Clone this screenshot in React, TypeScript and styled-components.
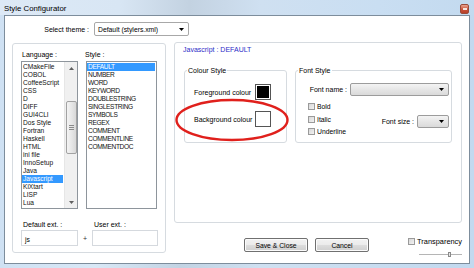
import React from "react";
import styled, { createGlobalStyle } from "styled-components";

const GlobalStyle = createGlobalStyle`
  html, body { margin: 0; padding: 0; }
  body {
    width: 474px; height: 268px; overflow: hidden;
    font-family: "Liberation Sans", Arial, sans-serif;
    color: #000;
  }
  * { box-sizing: border-box; }
`;

const Frame = styled.div`
  width: 474px;
  height: 268px;
  display: flex;
  flex-direction: column;
  background: linear-gradient(90deg, #cfe1f3 0%, #d9e8f6 20%, #c2d3e3 38%, #cfe0f1 55%, #c2d9ef 100%);
`;

const TitleBar = styled.div`
  height: 15px;
  display: flex;
  align-items: center;
  padding: 0 5px 0 4px;
  font-size: 7.8px;
  background: linear-gradient(90deg, #dde9f6 0%, #d8e6f4 25%, #c3d2e1 40%, #cfe0f1 55%, #c9def2 80%, #c3daef 100%);
`;

const TitleText = styled.span`
  flex: 1;
  padding-top: 1px;
`;

const CloseButton = styled.div`
  width: 9px;
  height: 10px;
  margin-top: 2px;
  border: 1px solid #9a4b3a;
  border-radius: 2px;
  background: linear-gradient(#eaa592, #c9523a 55%, #b8402a);
  display: flex;
  align-items: center;
  justify-content: center;
  &::after {
    content: "";
    width: 4px;
    height: 2px;
    background: #f6e6e0;
  }
`;

const Client = styled.div`
  flex: 1;
  margin: 0 4px 4px 4px;
  border: 1px solid #7d8d9c;
  background: #fff;
  display: flex;
  flex-direction: column;
`;

const ThemeRow = styled.div`
  margin-top: 6px;
  height: 14px;
  padding-left: 38px;
  display: flex;
  align-items: center;
  gap: 5px;
  font-size: 7px;
`;

const ThemeLabel = styled.span`
  width: 46px;
  text-align: right;
`;

const Combo = styled.div<{ $w: number; $h: number; $flat?: boolean }>`
  width: ${(p) => p.$w}px;
  height: ${(p) => p.$h}px;
  border: 1px solid ${(p) => (p.$flat ? "#a8a8a8" : "#9c9c9c")};
  border-radius: 2px;
  background: ${(p) =>
    p.$flat ? "#fff" : "linear-gradient(#f4f4f4, #e6e6e6 50%, #dadada)"};
  display: flex;
  align-items: center;
  padding: 0 4px 0 3px;
  font-size: 6.8px;
  svg { margin-left: auto; }
`;

const DownArrow = () => (
  <svg width="5" height="3" viewBox="0 0 5 3">
    <path d="M0 0 H5 L2.5 3 Z" fill="#000" />
  </svg>
);

const Main = styled.div`
  margin-top: 6px;
  padding-left: 7px;
  display: flex;
  gap: 8px;
`;

const GroupBox = styled.div`
  border: 1px solid #d6dbe0;
  border-radius: 3px;
  background: #fff;
`;

const LeftGroup = styled(GroupBox)`
  width: 154px;
  height: 210px;
  margin-top: 1px;
  padding: 7px 0 0 8px;
  font-size: 7px;
`;

const ListGrid = styled.div`
  display: grid;
  grid-template-columns: 57px 71px;
  column-gap: 8px;
`;

const ColLabel = styled.div<{ $shift?: number }>`
  height: 10px;
  padding-left: 1px;
  margin-left: ${(p) => p.$shift ?? 0}px;
`;

const ListBox = styled.div`
  height: 148px;
  border: 1px solid #8e959c;
  background: #fff;
  display: flex;
`;

const Items = styled.div`
  flex: 1;
  padding: 1px 0 0 0;
  overflow: hidden;
`;

const Item = styled.div<{ $sel?: boolean; $caps?: boolean }>`
  height: 8px;
  line-height: 8px;
  font-size: 6.6px;
  padding-left: 1px;
  margin-right: 1px;
  white-space: nowrap;
  letter-spacing: ${(p) => (p.$caps ? "-0.35px" : "0")};
  background: ${(p) => (p.$sel ? "#3399ff" : "transparent")};
  color: ${(p) => (p.$sel ? "#fff" : "#111")};
`;

const ScrollBar = styled.div`
  width: 13px;
  background: #f0f0f0;
  border-left: 1px solid #e6e6e6;
  display: flex;
  flex-direction: column;
  align-items: center;
`;

const ScrollArrow = styled.div`
  height: 12px;
  display: flex;
  align-items: center;
  justify-content: center;
`;

const Thumb = styled.div`
  width: 11px;
  height: 53px;
  margin-top: 27px;
  border: 1px solid #a2a2a2;
  border-radius: 2px;
  background: linear-gradient(90deg, #f4f4f4, #e4e4e4 60%, #d8d8d8);
  display: flex;
  align-items: center;
  justify-content: center;
`;

const Grip = styled.div`
  width: 5px;
  height: 5px;
  background: repeating-linear-gradient(#8a8a8a 0 1px, transparent 1px 2px);
`;

const Spacer = styled.div`
  flex: 1;
`;

const ExtLabels = styled.div`
  margin-top: 9px;
  height: 10px;
  display: grid;
  grid-template-columns: 57px 14px 66px;
  align-items: end;
`;

const ExtLabel = styled.div<{ $drop?: number }>`
  padding-left: 2px;
  padding-top: ${(p) => p.$drop ?? 0}px;
`;

const ExtInputs = styled.div`
  margin-top: 2px;
  display: grid;
  grid-template-columns: 57px 14px 66px;
  align-items: center;
`;

const TextInput = styled.div`
  height: 16px;
  border: 1px solid #d5d9de;
  background: #fff;
  font-size: 6.8px;
  padding: 5px 0 0 3px;
`;

const Plus = styled.div`
  text-align: center;
  font-size: 7px;
  color: #333;
`;

const RightCol = styled.div`
  width: 288px;
  display: flex;
  flex-direction: column;
`;

const RightGroup = styled(GroupBox)`
  position: relative;
  height: 181px;
  padding: 3px 0 0 9px;
  font-size: 7px;
`;

const StyleTitle = styled.div`
  height: 9px;
  margin-left: -1px;
  color: #2d2dc8;
  font-size: 7px;
`;

const SubRow = styled.div`
  margin-top: 11px;
  display: flex;
  gap: 8px;
`;

const SubGroup = styled.fieldset<{ $w: number }>`
  width: ${(p) => p.$w}px;
  height: 77px;
  margin: 0;
  border: 1px solid #d6dbe0;
  border-radius: 3px;
  padding: 0;
  min-width: 0;
`;

const Legend = styled.legend`
  font-size: 7px;
  line-height: 9px;
  padding: 0 1px;
  margin-left: 2px;
`;

const ColourBody = styled.div`
  padding: 9px 0 0 9px;
  display: flex;
  flex-direction: column;
  gap: 11px;
`;

const ColourRow = styled.div`
  width: 77px;
  height: 16px;
  display: flex;
  align-items: center;
  justify-content: space-between;
`;

const Swatch = styled.div<{ $c: string }>`
  width: 16px;
  height: 16px;
  border: 1px solid #555;
  background: ${(p) => p.$c};
  box-shadow: inset 0 0 0 1px #fff;
`;

const FontBody = styled.div`
  padding: 8px 2px 0 12px;
  display: flex;
  flex-direction: column;
`;

const FontNameRow = styled.div`
  display: flex;
  justify-content: flex-end;
  align-items: center;
  gap: 3px;
`;

const FontLower = styled.div`
  margin-top: 7px;
  display: flex;
  align-items: center;
`;

const CheckCol = styled.div`
  display: flex;
  flex-direction: column;
`;

const CheckRow = styled.div`
  height: 12.5px;
  display: flex;
  align-items: flex-start;
  gap: 2px;
  font-size: 6.8px;
  line-height: 7px;
`;

const Box = styled.div`
  width: 7px;
  height: 7px;
  border: 1px solid #9a9a9a;
  background: linear-gradient(135deg, #d8d8d8, #f2f2f2);
`;

const FontSizeRow = styled.div`
  margin-left: auto;
  display: flex;
  align-items: center;
  gap: 3px;
`;

const Ellipse = styled.svg`
  position: absolute;
  left: -1px;
  top: 55px;
  pointer-events: none;
`;

const BottomRow = styled.div`
  margin-top: 15px;
  padding-left: 70px;
  display: flex;
  align-items: flex-start;
  gap: 7px;
`;

const Button = styled.div<{ $w: number }>`
  width: ${(p) => p.$w}px;
  height: 14px;
  border: 1px solid #707070;
  border-radius: 2px;
  background: linear-gradient(#f2f2f2, #ebebeb 50%, #dddddd 51%, #cfcfcf);
  box-shadow: inset 0 0 0 1px #fbfbfb;
  font-size: 6.8px;
  display: flex;
  align-items: center;
  justify-content: center;
`;

const TransBlock = styled.div`
  margin-left: auto;
  display: flex;
  flex-direction: column;
  align-items: flex-end;
`;

const TransRow = styled.div`
  display: flex;
  align-items: center;
  gap: 2px;
  font-size: 7.4px;
  line-height: 7px;
`;

const Slider = styled.div`
  margin-top: 7px;
  width: 43px;
  height: 5px;
  position: relative;
  &::before {
    content: "";
    position: absolute;
    left: 0;
    right: 0;
    top: 2px;
    height: 1px;
    background: #b5b5b5;
  }
`;

const SliderThumb = styled.div`
  position: absolute;
  left: 29px;
  top: 0;
  width: 3px;
  height: 5px;
  border: 1px solid #8a8a8a;
  background: #e8e8e8;
`;

const languages = [
  "CMakeFile", "COBOL", "CoffeeScript", "CSS", "D", "DIFF", "GUI4CLI", "Dos Style",
  "Fortran", "Haskell", "HTML", "ini file", "InnoSetup", "Java", "Javascript",
  "KiXtart", "LISP", "Lua",
];

const styles = [
  "DEFAULT", "NUMBER", "WORD", "KEYWORD", "DOUBLESTRING", "SINGLESTRING",
  "SYMBOLS", "REGEX", "COMMENT", "COMMENTLINE", "COMMENTDOC",
];

const UpArrow = () => (
  <svg width="5" height="3" viewBox="0 0 5 3">
    <path d="M0 3 H5 L2.5 0 Z" fill="#606060" />
  </svg>
);

const SmallDown = () => (
  <svg width="5" height="3" viewBox="0 0 5 3">
    <path d="M0 0 H5 L2.5 3 Z" fill="#606060" />
  </svg>
);

export default function App() {
  return (
    <>
      <GlobalStyle />
      <Frame>
        <TitleBar>
          <TitleText>Style Configurator</TitleText>
          <CloseButton />
        </TitleBar>
        <Client>
          <ThemeRow>
            <ThemeLabel>Select theme :</ThemeLabel>
            <Combo $w={95} $h={14} $flat>
              Default (stylers.xml)
              <DownArrow />
            </Combo>
          </ThemeRow>
          <Main>
            <LeftGroup>
              <ListGrid>
                <ColLabel>Language :</ColLabel>
                <ColLabel $shift={-2}>Style :</ColLabel>
                <ListBox>
                  <Items>
                    {languages.map((l) => (
                      <Item key={l} $sel={l === "Javascript"}>
                        {l}
                      </Item>
                    ))}
                  </Items>
                  <ScrollBar>
                    <ScrollArrow>
                      <UpArrow />
                    </ScrollArrow>
                    <Thumb>
                      <Grip />
                    </Thumb>
                    <Spacer />
                    <ScrollArrow>
                      <SmallDown />
                    </ScrollArrow>
                  </ScrollBar>
                </ListBox>
                <ListBox>
                  <Items>
                    {styles.map((s) => (
                      <Item key={s} $caps $sel={s === "DEFAULT"}>
                        {s}
                      </Item>
                    ))}
                  </Items>
                </ListBox>
              </ListGrid>
              <ExtLabels>
                <ExtLabel>Default ext. :</ExtLabel>
                <span />
                <ExtLabel $drop={2}>User ext. :</ExtLabel>
              </ExtLabels>
              <ExtInputs>
                <TextInput>js</TextInput>
                <Plus>+</Plus>
                <TextInput />
              </ExtInputs>
            </LeftGroup>
            <RightCol>
              <RightGroup>
                <StyleTitle>Javascript : DEFAULT</StyleTitle>
                <SubRow>
                  <SubGroup $w={103}>
                    <Legend>Colour Style</Legend>
                    <ColourBody>
                      <ColourRow>
                        Foreground colour
                        <Swatch $c="#000" />
                      </ColourRow>
                      <ColourRow>
                        Background colour
                        <Swatch $c="#fff" />
                      </ColourRow>
                    </ColourBody>
                  </SubGroup>
                  <SubGroup $w={157}>
                    <Legend>Font Style</Legend>
                    <FontBody>
                      <FontNameRow>
                        Font name :
                        <Combo $w={99} $h={13}>
                          <DownArrow />
                        </Combo>
                      </FontNameRow>
                      <FontLower>
                        <CheckCol>
                          <CheckRow>
                            <Box />
                            Bold
                          </CheckRow>
                          <CheckRow>
                            <Box />
                            Italic
                          </CheckRow>
                          <CheckRow>
                            <Box />
                            Underline
                          </CheckRow>
                        </CheckCol>
                        <FontSizeRow>
                          Font size :
                          <Combo $w={32} $h={13}>
                            <DownArrow />
                          </Combo>
                        </FontSizeRow>
                      </FontLower>
                    </FontBody>
                  </SubGroup>
                </SubRow>
                <Ellipse width="118" height="46" viewBox="0 0 118 46">
                  <ellipse cx="58" cy="22" rx="55.5" ry="20" fill="none" stroke="#e0201c" strokeWidth="2.4" />
                </Ellipse>
              </RightGroup>
              <BottomRow>
                <Button $w={64}>Save &amp; Close</Button>
                <Button $w={54}>Cancel</Button>
                <TransBlock>
                  <TransRow>
                    <Box />
                    Transparency
                  </TransRow>
                  <Slider>
                    <SliderThumb />
                  </Slider>
                </TransBlock>
              </BottomRow>
            </RightCol>
          </Main>
        </Client>
      </Frame>
    </>
  );
}
